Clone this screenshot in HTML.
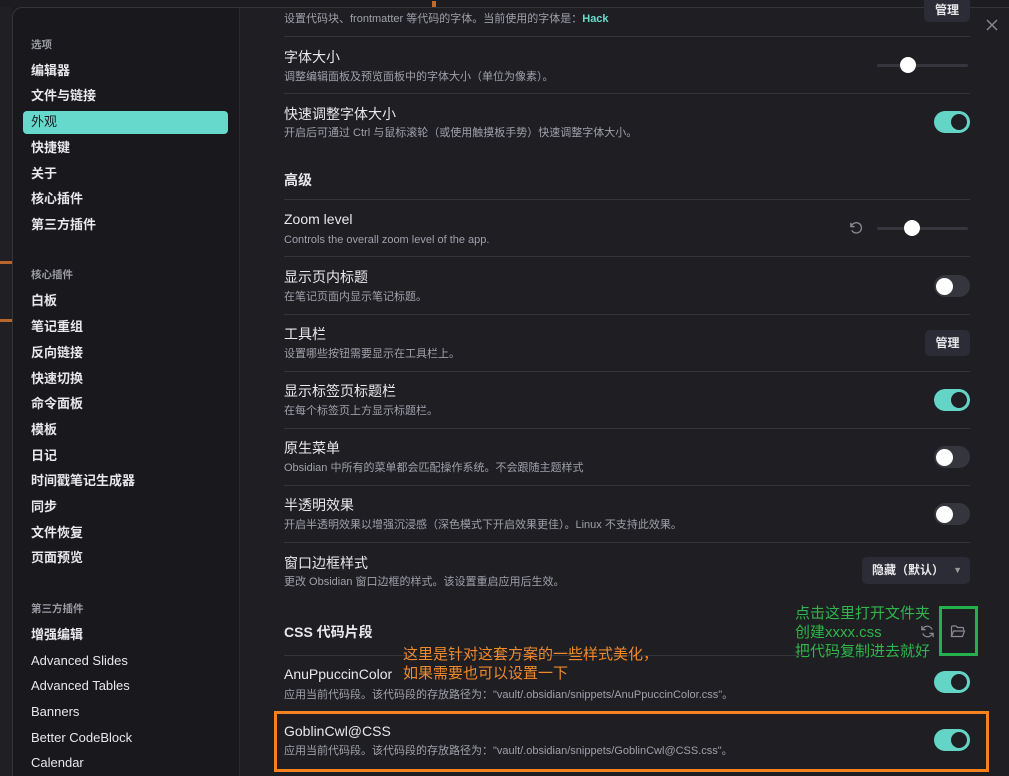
<!DOCTYPE html>
<html style="width:1009px;height:776px;overflow:hidden"><head><meta charset="utf-8"><style>
*{margin:0;padding:0;box-sizing:border-box}
body{width:1009px;height:776px;overflow:hidden;background:#1b1b1f;font-family:"Liberation Sans","Noto Sans CJK SC",sans-serif;position:relative}
.a{position:absolute;white-space:nowrap}
#bgstrip{left:0;top:0;width:12px;height:776px;background:#1f1f24}
#modal{left:12px;top:7px;width:997px;height:769px;border:1px solid #34343b;border-right:none;border-bottom:none;border-top-left-radius:10px;overflow:hidden;background:#1e1e23}
#side{left:13px;top:8px;width:227px;height:768px;background:#19191d;border-right:1px solid #2b2b31;border-top-left-radius:10px}
.si{left:31px;font-size:13px;color:#e8e8ea;font-weight:bold;line-height:16px}
.sh{left:31px;font-size:10.5px;color:#9a9aa2;font-weight:bold;line-height:14px}
.t{left:284px;font-size:14px;color:#e9e9ec;line-height:18px}
.d{left:284px;font-size:11px;color:#a0a0aa;line-height:14px}
.sep{left:284px;width:686px;height:1px;background:#34343a}
.tg{width:36px;height:22px;border-radius:11px;left:934px}
.tg.on{background:#64d4c6}
.tg.on::after{content:"";position:absolute;right:3px;top:3px;width:16px;height:16px;border-radius:50%;background:#1e1e23}
.tg.off{background:#35353e}
.tg.off::after{content:"";position:absolute;left:2px;top:3px;width:17px;height:17px;border-radius:50%;background:#fff}
.trk{left:877px;width:91px;height:3px;background:#36363f;border-radius:2px}
.knob{width:16px;height:16px;border-radius:50%;background:#fff}
.btn{background:#2c2c36;border-radius:5px;color:#e8e8ea;font-size:12px;font-weight:bold;text-align:center}
.g{color:#2fb54a;font-size:15px;line-height:19px;left:795px}
.o{color:#f08a2b;font-size:15px;line-height:19px;left:403px}
</style></head><body>
<div class="a" id="bgstrip"></div>
<div class="a" style="left:0;top:0;width:1009px;height:7px;background:#1d1d21"></div>
<div class="a" style="left:432px;top:1px;width:4px;height:6px;background:#c26a2a"></div>
<div class="a" style="left:0;top:261px;width:12px;height:3px;background:#b8662a"></div>
<div class="a" style="left:0;top:319px;width:12px;height:3px;background:#b8662a"></div>
<div class="a" id="modal"></div>
<div class="a" id="side"></div>
<div class="a" style="left:23px;top:111px;width:205px;height:23px;border-radius:4px;background:#66d9cc"></div>

<div class="a sh" style="top:38px">选项</div>
<div class="a si" style="top:63px">编辑器</div>
<div class="a si" style="top:88px">文件与链接</div>
<div class="a si" style="top:114px;color:#1b1b1f;font-weight:normal">外观</div>
<div class="a si" style="top:140px">快捷键</div>
<div class="a si" style="top:166px">关于</div>
<div class="a si" style="top:191px">核心插件</div>
<div class="a si" style="top:217px">第三方插件</div>
<div class="a sh" style="top:268px">核心插件</div>
<div class="a si" style="top:293px">白板</div>
<div class="a si" style="top:319px">笔记重组</div>
<div class="a si" style="top:345px">反向链接</div>
<div class="a si" style="top:371px">快速切换</div>
<div class="a si" style="top:396px">命令面板</div>
<div class="a si" style="top:422px">模板</div>
<div class="a si" style="top:448px">日记</div>
<div class="a si" style="top:473px">时间戳笔记生成器</div>
<div class="a si" style="top:499px">同步</div>
<div class="a si" style="top:525px">文件恢复</div>
<div class="a si" style="top:550px">页面预览</div>
<div class="a sh" style="top:602px">第三方插件</div>
<div class="a si" style="top:627px">增强编辑</div>
<div class="a si" style="top:653px;font-weight:normal">Advanced Slides</div>
<div class="a si" style="top:678px;font-weight:normal">Advanced Tables</div>
<div class="a si" style="top:704px;font-weight:normal">Banners</div>
<div class="a si" style="top:730px;font-weight:normal">Better CodeBlock</div>
<div class="a si" style="top:755px;font-weight:normal">Calendar</div>

<svg class="a" style="left:986px;top:19px" width="12" height="12" viewBox="0 0 12 12"><path d="M1 1L11 11M11 1L1 11" stroke="#8a8a92" stroke-width="1.4"/></svg>

<div class="a btn" style="left:924px;top:0px;width:46px;height:22px;line-height:20px;border-radius:0 0 5px 5px">管理</div>
<div class="a d" style="top:12px">设置代码块、frontmatter 等代码的字体。当前使用的字体是：<b style="color:#6fd8cc">Hack</b></div>
<div class="a sep" style="top:36px"></div>

<div class="a t" style="top:48px">字体大小</div>
<div class="a d" style="top:70px">调整编辑面板及预览面板中的字体大小（单位为像素）。</div>
<div class="a trk" style="top:64px"></div>
<div class="a knob" style="left:900px;top:57px"></div>
<div class="a sep" style="top:93px"></div>

<div class="a t" style="top:105px">快速调整字体大小</div>
<div class="a d" style="top:126px">开启后可通过 Ctrl 与鼠标滚轮（或使用触摸板手势）快速调整字体大小。</div>
<div class="a tg on" style="top:111px"></div>

<div class="a t" style="top:171px;font-weight:bold">高级</div>
<div class="a sep" style="top:199px"></div>

<div class="a t" style="top:210px">Zoom level</div>
<div class="a d" style="top:233px">Controls the overall zoom level of the app.</div>
<svg class="a" style="left:848px;top:220px" width="15" height="15" viewBox="0 0 16 16"><path d="M3 3v4h4" fill="none" stroke="#8a8a92" stroke-width="1.4"/><path d="M3.5 7A5.5 5.5 0 1 1 4 11" fill="none" stroke="#8a8a92" stroke-width="1.4"/></svg>
<div class="a trk" style="top:227px"></div>
<div class="a knob" style="left:904px;top:220px"></div>
<div class="a sep" style="top:256px"></div>

<div class="a t" style="top:268px">显示页内标题</div>
<div class="a d" style="top:290px">在笔记页面内显示笔记标题。</div>
<div class="a tg off" style="top:275px"></div>
<div class="a sep" style="top:314px"></div>

<div class="a t" style="top:325px">工具栏</div>
<div class="a d" style="top:347px">设置哪些按钮需要显示在工具栏上。</div>
<div class="a btn" style="left:925px;top:330px;width:45px;height:26px;line-height:26px">管理</div>
<div class="a sep" style="top:371px"></div>

<div class="a t" style="top:382px">显示标签页标题栏</div>
<div class="a d" style="top:404px">在每个标签页上方显示标题栏。</div>
<div class="a tg on" style="top:389px"></div>
<div class="a sep" style="top:428px"></div>

<div class="a t" style="top:439px">原生菜单</div>
<div class="a d" style="top:461px">Obsidian 中所有的菜单都会匹配操作系统。不会跟随主题样式</div>
<div class="a tg off" style="top:446px"></div>
<div class="a sep" style="top:485px"></div>

<div class="a t" style="top:496px">半透明效果</div>
<div class="a d" style="top:518px">开启半透明效果以增强沉浸感（深色模式下开启效果更佳）。Linux 不支持此效果。</div>
<div class="a tg off" style="top:503px"></div>
<div class="a sep" style="top:542px"></div>

<div class="a t" style="top:554px">窗口边框样式</div>
<div class="a d" style="top:575px">更改 Obsidian 窗口边框的样式。该设置重启应用后生效。</div>
<div class="a btn" style="left:862px;top:557px;width:108px;height:27px;line-height:27px;text-align:left;padding-left:10px">隐藏（默认）<span style="position:absolute;right:8px;top:0;font-size:9px;color:#999">▼</span></div>

<div class="a t" style="top:623px;font-weight:bold">CSS 代码片段</div>
<svg class="a" style="left:920px;top:624px" width="15" height="15" viewBox="0 0 16 16" fill="none" stroke="#8a8a92" stroke-width="1.3"><path d="M13 6A5.5 5.5 0 0 0 3.5 4.5L2 6M2 2v4h4"/><path d="M3 10a5.5 5.5 0 0 0 9.5 1.5L14 10M14 14v-4h-4"/></svg>
<svg class="a" style="left:950px;top:624px" width="16" height="15" viewBox="0 0 16 15" fill="none" stroke="#8a8a92" stroke-width="1.2"><path d="M1.5 12.5V3a1 1 0 0 1 1-1h3.5l1.5 1.5h5a1 1 0 0 1 1 1V6"/><path d="M1.5 12.5L3.5 7h11l-2 5.5z"/></svg>
<div class="a" style="left:939px;top:606px;width:39px;height:50px;border:3px solid #22b14c"></div>
<div class="a g" style="top:604px">点击这里打开文件夹</div>
<div class="a g" style="top:623px">创建xxxx.css</div>
<div class="a g" style="top:642px">把代码复制进去就好</div>
<div class="a sep" style="top:655px;width:520px"></div>

<div class="a t" style="top:665px">AnuPpuccinColor</div>
<div class="a d" style="top:688px">应用当前代码段。该代码段的存放路径为："vault/.obsidian/snippets/AnuPpuccinColor.css"。</div>
<div class="a tg on" style="top:671px"></div>
<div class="a o" style="top:645px">这里是针对这套方案的一些样式美化，</div>
<div class="a o" style="top:664px">如果需要也可以设置一下</div>

<div class="a" style="left:274px;top:711px;width:715px;height:61px;border:3px solid #f58220"></div>
<div class="a t" style="top:722px">GoblinCwl@CSS</div>
<div class="a d" style="top:744px">应用当前代码段。该代码段的存放路径为："vault/.obsidian/snippets/GoblinCwl@CSS.css"。</div>
<div class="a tg on" style="top:729px"></div>
</body></html>
